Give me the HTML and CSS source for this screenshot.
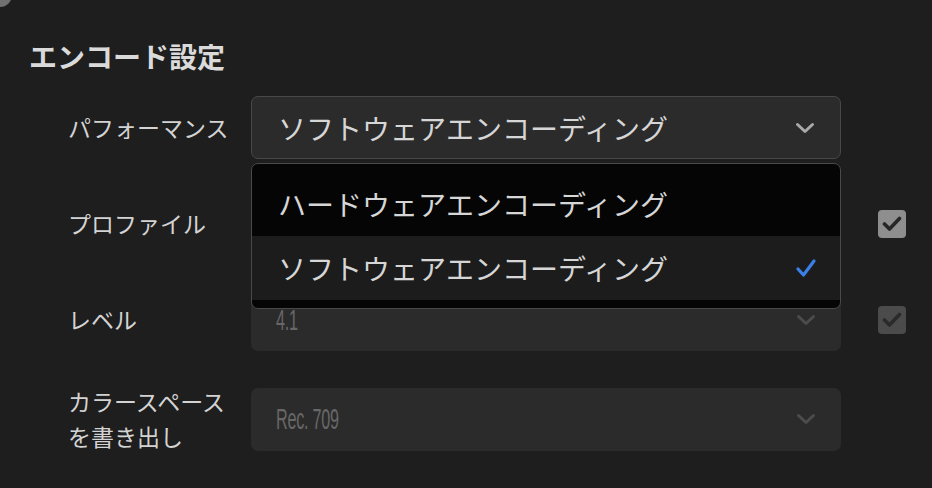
FILE: index.html
```html
<!DOCTYPE html>
<html lang="ja">
<head>
<meta charset="utf-8">
<link rel="stylesheet" href="styles.css">
</head>
<body>
<div class="corner"></div>
<main class="page">
  <h1 class="title">エンコード設定</h1>
  <div class="form">
    <div class="label">パフォーマンス</div>
    <div class="select-wrap">
      <div class="select active">
        <span class="value">ソフトウェアエンコーディング</span>
        <svg class="chev" width="20" height="12" viewBox="0 0 20 12"><path d="M2.5 2.5 L10 9.5 L17.5 2.5" fill="none" stroke="#a9a9a9" stroke-width="3" stroke-linecap="round" stroke-linejoin="round"/></svg>
      </div>
      <div class="menu">
        <div class="item">ハードウェアエンコーディング</div>
        <div class="item selected">ソフトウェアエンコーディング
          <svg class="tick" width="22" height="20" viewBox="0 0 22 20"><path d="M3 11 L8.5 17 L19 3" fill="none" stroke="#3b7fe9" stroke-width="3.2" stroke-linecap="round" stroke-linejoin="round"/></svg>
        </div>
      </div>
    </div>
    <div></div>

    <div class="label">プロファイル</div>
    <div class="select disabled"></div>
    <div class="check on"><svg width="20" height="16" viewBox="0 0 20 16"><path d="M2.5 8 L7.5 13 L17.5 2.5" fill="none" stroke="#262626" stroke-width="3.6" stroke-linecap="round" stroke-linejoin="round"/></svg></div>

    <div class="label">レベル</div>
    <div class="select disabled">
      <span class="value latin">4.1</span>
      <svg class="chev" width="20" height="12" viewBox="0 0 20 12"><path d="M2.5 2.5 L10 9.5 L17.5 2.5" fill="none" stroke="#4c4c4c" stroke-width="3" stroke-linecap="round" stroke-linejoin="round"/></svg>
    </div>
    <div class="check off"><svg width="20" height="16" viewBox="0 0 20 16"><path d="M2.5 8 L7.5 13 L17.5 2.5" fill="none" stroke="#2a2a2a" stroke-width="3.6" stroke-linecap="round" stroke-linejoin="round"/></svg></div>

    <div class="label two">カラースペース<br>を書き出し</div>
    <div class="select disabled">
      <span class="value latin">Rec. 709</span>
      <svg class="chev" width="20" height="12" viewBox="0 0 20 12"><path d="M2.5 2.5 L10 9.5 L17.5 2.5" fill="none" stroke="#4c4c4c" stroke-width="3" stroke-linecap="round" stroke-linejoin="round"/></svg>
    </div>
    <div></div>
  </div>
</main>
</body>
</html>
```

FILE: styles.css
```css
html, body {
  margin: 0;
  padding: 0;
  background: #1e1e1e;
  width: 932px;
  height: 488px;
  overflow: hidden;
}
body {
  font-family: "Noto Sans CJK JP", "Noto Sans", sans-serif;
  color: #d3d3d3;
  position: relative;
}
.corner {
  position: absolute;
  left: -12px;
  top: -17px;
  width: 24px;
  height: 24px;
  border-radius: 50%;
  background: #707070;
}
.page {
  padding: 38px 0 0 29px;
}
.title {
  margin: 0;
  font-size: 28px;
  font-weight: 700;
  line-height: 36px;
  color: #dadada;
}
.form {
  margin-top: 22px;
  margin-left: 39px;
  display: grid;
  grid-template-columns: 183px 590px 65px;
  grid-template-rows: 63px 63px 63px 70px;
  row-gap: 33px;
  align-items: center;
}
.label {
  font-size: 23px;
  line-height: 35px;
  color: #d3d3d3;
}
.select-wrap {
  position: relative;
  height: 63px;
}
.select {
  box-sizing: border-box;
  height: 63px;
  border-radius: 7px;
  background: #2b2b2b;
  display: flex;
  align-items: center;
  justify-content: space-between;
  padding: 0 25px 0 26px;
}
.select.active {
  border: 1px solid #484848;
  background: #2b2b2b;
}
.value {
  font-size: 28px;
  color: #d6d6d6;
  white-space: nowrap;
}
.disabled .value {
  color: #676767;
}
.latin {
  font-family: "Liberation Sans", sans-serif;
  font-size: 30px;
  display: inline-block;
  transform: scaleX(0.54);
  transform-origin: left center;
  letter-spacing: -0.5px;
}
.disabled {
  padding-left: 25px;
}
.chev {
  display: block;
}
.menu {
  position: absolute;
  left: 0;
  right: 0;
  top: 67px;
  box-sizing: border-box;
  height: 146px;
  background: #050505;
  border: 1px solid #4a4a4a;
  border-radius: 7px;
  padding: 8px 0;
  overflow: hidden;
  z-index: 2;
}
.item {
  height: 64px;
  display: flex;
  align-items: center;
  justify-content: space-between;
  padding: 0 23px 0 26px;
  font-size: 28px;
  color: #d6d6d6;
}
.item.selected {
  background: #1c1c1c;
}
.tick {
  display: block;
}
.check {
  justify-self: end;
  width: 28px;
  height: 28px;
  border-radius: 4px;
  display: flex;
  align-items: center;
  justify-content: center;
}
.check.on {
  background: #8e8e8e;
}
.check.off {
  background: #4b4b4b;
}
```
